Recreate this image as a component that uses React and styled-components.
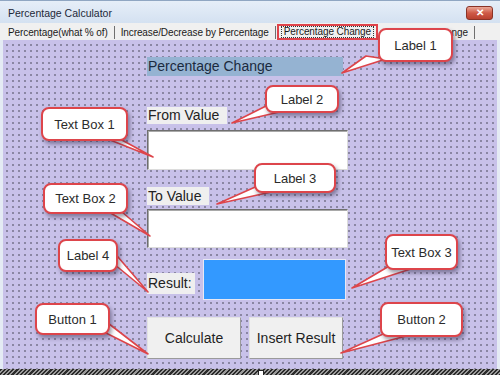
import React from 'react';
import styled, { createGlobalStyle } from 'styled-components';

const GlobalStyle = createGlobalStyle`
  html, body {
    margin: 0;
    padding: 0;
    background: #ffffff;
  }
  body {
    font-family: "Liberation Sans", Arial, sans-serif;
  }
`;

const Window = styled.div`
  position: relative;
  width: 500px;
  height: 375px;
  display: flex;
  flex-direction: column;
  overflow: hidden;
  background: #e4ebf4;
`;

const TitleBar = styled.div`
  height: 23px;
  box-sizing: border-box;
  display: flex;
  align-items: center;
  justify-content: space-between;
  padding: 1px 7px 0 8px;
  background: linear-gradient(#e6eef8, #d4e1f1);
  border-top: 1px solid #90a6c2;
  font-size: 10.5px;
  color: #1d2838;
`;

const CloseBtn = styled.div`
  width: 25px;
  height: 12px;
  border-radius: 3px;
  border: 1px solid #8a3327;
  background: linear-gradient(#eaa898, #cf5a47 50%, #b9412f);
  display: flex;
  align-items: center;
  justify-content: center;
  color: #ffffff;
  font-size: 10px;
  font-weight: bold;
  line-height: 1;
`;

const TabStrip = styled.div`
  height: 17px;
  display: flex;
  align-items: stretch;
  padding-left: 2px;
  background: #f0f0f0;
  font-size: 10px;
  letter-spacing: -0.1px;
  color: #1a1a1a;
`;

const Tab = styled.div`
  box-sizing: border-box;
  display: flex;
  align-items: center;
  padding: 1px 6px 0;
  width: ${p => (p.$w ? `${p.$w}px` : 'auto')};
  justify-content: ${p => (p.$end ? 'flex-end' : 'flex-start')};
  white-space: nowrap;
  overflow: hidden;
`;

const ActiveTab = styled.div`
  box-sizing: border-box;
  display: flex;
  align-items: center;
  margin: 1px 0 0 1px;
  padding: 0 2px;
  border: 2px solid #e0434a;
  white-space: nowrap;
`;

const FocusText = styled.span`
  border: 1px dotted #333333;
  padding: 0 2px;
  line-height: 10px;
`;

const Sep = styled.div`
  width: 1px;
  margin: 3px 0 1px;
  background: #6f6f6f;
`;

const Body = styled.div`
  flex: 1;
  margin: 0 3px;
  padding: 17px 0 0 144px;
  background-color: #c8c1e9;
  background-image: radial-gradient(circle, #464656 0.55px, transparent 0.85px);
  background-size: 6px 6px;
  background-position: 1px 2px;
`;

const Grip = styled.div`
  height: 6px;
  position: relative;
  background: repeating-linear-gradient(135deg, #2a2a2a 0 1.5px, #9a9a9a 1.5px 3px);
`;

const GripHandle = styled.div`
  position: absolute;
  left: 258px;
  top: 1px;
  width: 4px;
  height: 4px;
  background: #ffffff;
  border: 1px solid #222;
`;

const Form = styled.div`
  display: flex;
  flex-direction: column;
  align-items: flex-start;
`;

const Heading = styled.div`
  width: 195px;
  height: 19px;
  padding-left: 1px;
  background: #95b3d2;
  font-size: 14px;
  line-height: 19px;
  color: #1b2a3e;
`;

const Field = styled.div`
  display: flex;
  flex-direction: column;
  align-items: flex-start;
  gap: ${p => p.$gap}px;
  margin-top: ${p => p.$top}px;
`;

const FieldLabel = styled.div`
  padding: 0 8px 0 1px;
  height: ${p => p.$h || 18}px;
  background: #efefef;
  font-size: 14px;
  line-height: ${p => p.$h || 18}px;
  color: #222222;
`;

const TextBox = styled.div`
  box-sizing: border-box;
  width: ${p => p.$w || 201}px;
  height: ${p => p.$h || 40}px;
  background: ${p => p.$fill || '#ffffff'};
  border: 1px solid;
  border-color: ${p => (p.$fill ? '#e8e8f4' : '#6f6f6f #dcdcdc #dcdcdc #6f6f6f')};
  box-shadow: ${p => (p.$fill ? 'none' : 'inset 1px 1px 0 #a9a9a9')};
`;

const ResultRow = styled.div`
  display: flex;
  align-items: flex-end;
  gap: 8px;
  margin-top: 11px;
`;

const ResultLabel = styled(FieldLabel)`
  margin-bottom: 6px;
  padding-right: 3px;
  height: 21px;
  line-height: 21px;
`;

const ButtonRow = styled.div`
  display: flex;
  gap: 8px;
  margin-top: 17px;
`;

const Button = styled.button`
  width: 94px;
  height: 42px;
  box-sizing: border-box;
  background: #f0f0f0;
  border: 1px solid #a9a9a9;
  border-color: #e2e2e2 #9a9a9a #9a9a9a #e2e2e2;
  font-family: "Liberation Sans", Arial, sans-serif;
  font-size: 14px;
  color: #1f1f1f;
  padding: 0;
`;

const Overlay = styled.div`
  position: absolute;
  inset: 0;
  pointer-events: none;
`;

const Pointers = styled.svg`
  position: absolute;
  left: 0;
  top: 0;
`;

const Callout = styled.div`
  position: absolute;
  left: ${p => p.$x}px;
  top: ${p => p.$y}px;
  width: ${p => p.$w}px;
  height: ${p => p.$h}px;
  box-sizing: border-box;
  border: 2px solid #dd454b;
  border-radius: 8px;
  background: #ffffff;
  box-shadow: 2px 3px 4px rgba(40, 30, 60, 0.45);
  display: flex;
  align-items: center;
  justify-content: center;
  font-family: "Liberation Sans", Arial, sans-serif;
  font-size: 13px;
  color: #2b2b2b;
`;

const callouts = [
  { text: 'Label 1', x: 378, y: 28, w: 75, h: 34, wedge: [[366, 56], [386, 59], [342, 73]] },
  { text: 'Label 2', x: 265, y: 85, w: 74, h: 28, wedge: [[270, 104], [288, 110], [232, 123]] },
  { text: 'Text Box 1', x: 41, y: 107, w: 87, h: 34, wedge: [[100, 136], [120, 139], [153, 157]] },
  { text: 'Label 3', x: 254, y: 163, w: 82, h: 30, wedge: [[262, 184], [280, 190], [217, 204]] },
  { text: 'Text Box 2', x: 43, y: 183, w: 85, h: 31, wedge: [[102, 208], [122, 212], [150, 236]] },
  { text: 'Label 4', x: 58, y: 239, w: 60, h: 33, wedge: [[112, 250], [114, 264], [148, 292]] },
  { text: 'Text Box 3', x: 385, y: 234, w: 73, h: 36, wedge: [[396, 262], [420, 266], [352, 288]] },
  { text: 'Button 1', x: 35, y: 303, w: 75, h: 32, wedge: [[104, 320], [106, 333], [148, 354]] },
  { text: 'Button 2', x: 380, y: 302, w: 83, h: 35, wedge: [[392, 330], [414, 334], [341, 353]] },
];

export default function App() {
  return (
    <>
      <GlobalStyle />
      <Window>
        <TitleBar>
          <span>Percentage Calculator</span>
          <CloseBtn>✕</CloseBtn>
        </TitleBar>
        <TabStrip>
          <Tab>Percentage(what % of)</Tab>
          <Sep />
          <Tab>Increase/Decrease by Percentage</Tab>
          <Sep />
          <ActiveTab>
            <FocusText>Percentage Change</FocusText>
          </ActiveTab>
          <Tab $w={96} $end>Percentage Range</Tab>
          <Sep />
        </TabStrip>
        <Body>
          <Form>
            <Heading>Percentage Change</Heading>
            <Field $top={31} $gap={6}>
              <FieldLabel $h={17}>From Value</FieldLabel>
              <TextBox />
            </Field>
            <Field $top={17} $gap={4}>
              <FieldLabel>To Value</FieldLabel>
              <TextBox $h={39} />
            </Field>
            <ResultRow>
              <ResultLabel>Result:</ResultLabel>
              <TextBox $w={143} $h={41} $fill="#3399ff" />
            </ResultRow>
            <ButtonRow>
              <Button>Calculate</Button>
              <Button>Insert Result</Button>
            </ButtonRow>
          </Form>
        </Body>
        <Grip>
          <GripHandle />
        </Grip>
        <Overlay>
          <Pointers width="500" height="375" viewBox="0 0 500 375">
            {callouts.map(c => (
              <polygon
                key={c.text}
                points={c.wedge.map(pt => pt.join(',')).join(' ')}
                fill="#ffffff"
                stroke="#dd454b"
                strokeWidth="1.6"
                strokeLinejoin="round"
              />
            ))}
          </Pointers>
          {callouts.map(c => (
            <Callout key={c.text} $x={c.x} $y={c.y} $w={c.w} $h={c.h}>
              {c.text}
            </Callout>
          ))}
        </Overlay>
      </Window>
    </>
  );
}
